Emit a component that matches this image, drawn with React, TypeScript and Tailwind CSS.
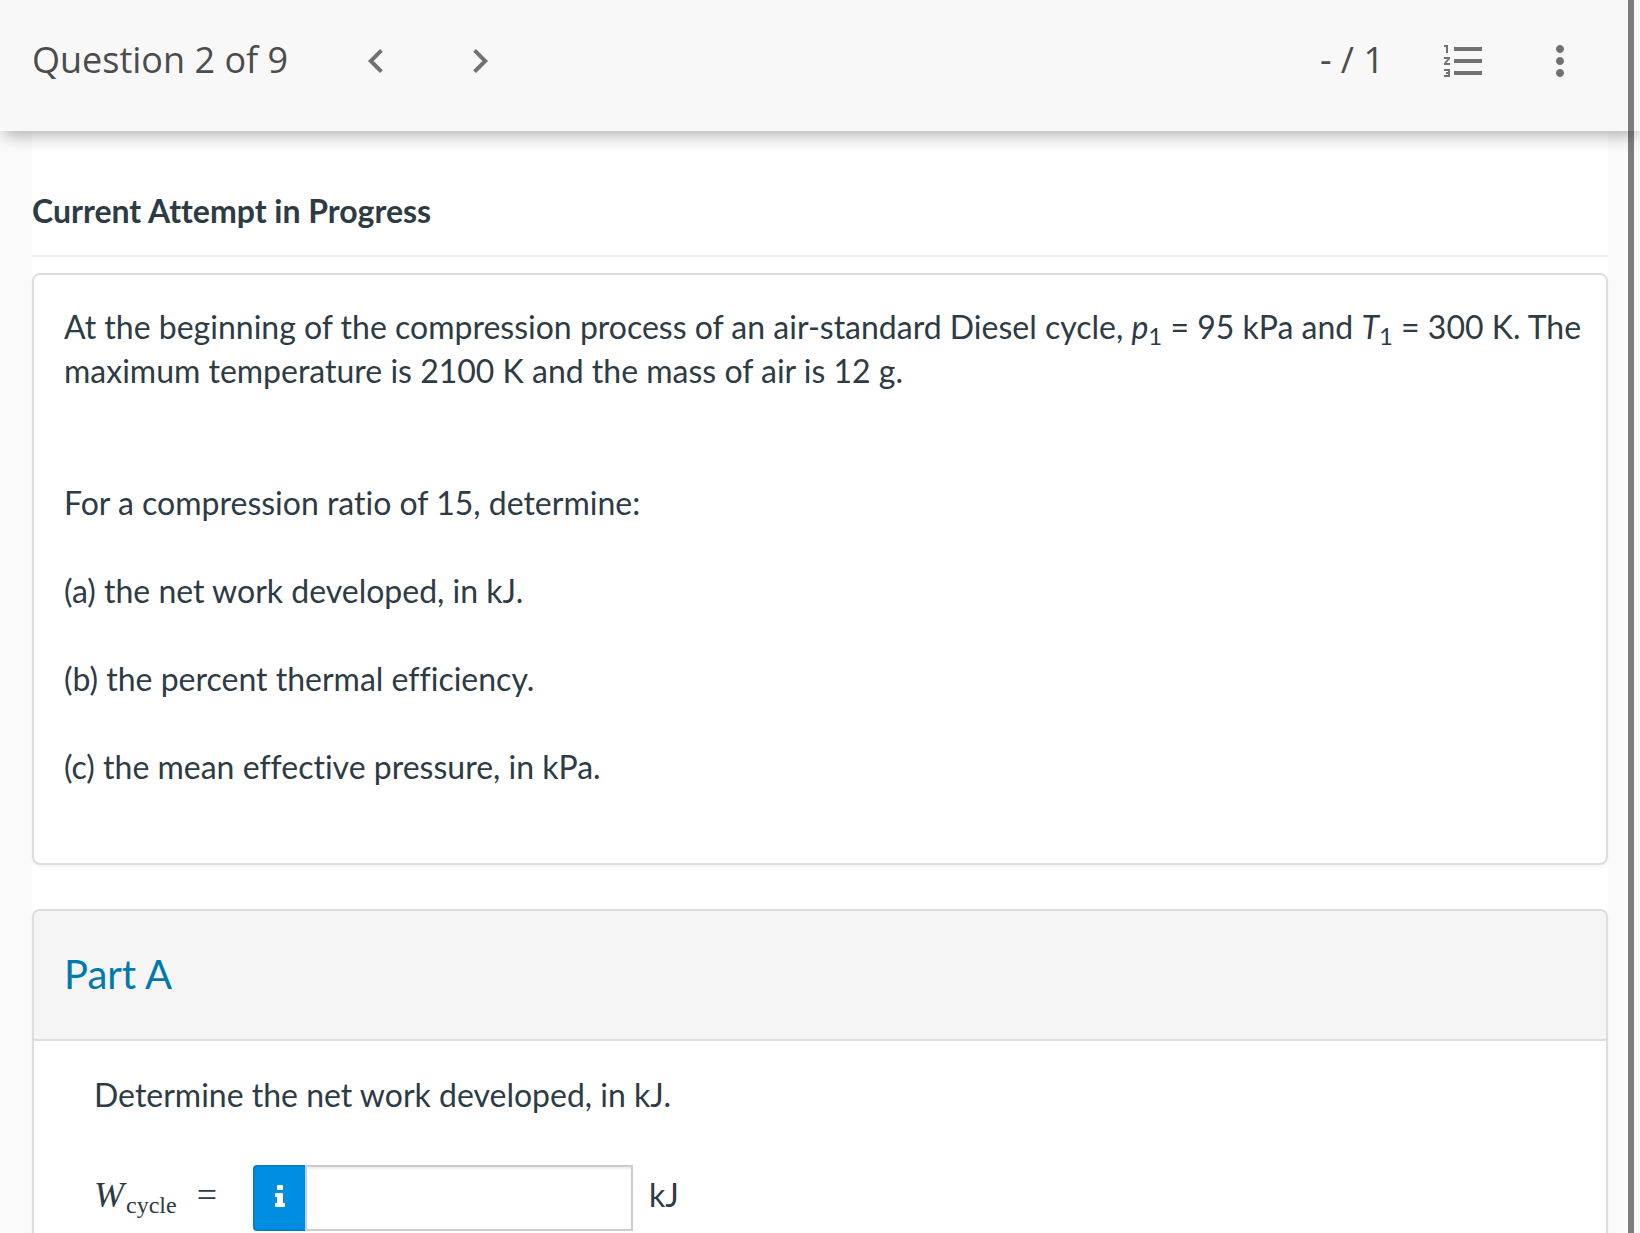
import { MdMoreVert, MdFormatListNumbered, MdChevronLeft, MdChevronRight } from "react-icons/md";

const tasks = [
  "For a compression ratio of 15, determine:",
  "(a) the net work developed, in kJ.",
  "(b) the percent thermal efficiency.",
  "(c) the mean effective pressure, in kPa.",
];

export default function App() {
  return (
    <div className="relative h-screen overflow-hidden bg-[#fafafa] font-['Lato',sans-serif] text-[32px] leading-[44px] text-[#2d3b45]">
      {/* Header */}
      <header className="relative z-10 flex h-[131px] items-start bg-[#f8f8f8] pt-[37px] pr-14 pl-8 font-['Open_Sans',sans-serif] text-[36px] leading-[46px] text-[#4c4c4c] shadow-[0_8px_16px_-4px_rgba(0,0,0,0.32)]">
        <h1>Question 2 of 9</h1>
        <nav className="ml-16 flex gap-14">
          <button aria-label="Previous question"><MdChevronLeft size={48} color="#717171" /></button>
          <button aria-label="Next question"><MdChevronRight size={48} color="#717171" /></button>
        </nav>
        <div className="ml-auto flex items-start">
          <span className="mr-14">- / 1</span>
          <button aria-label="Question list" className="mr-12"><MdFormatListNumbered size={48} color="#717171" /></button>
          <button aria-label="More options"><MdMoreVert size={48} color="#717171" /></button>
        </div>
      </header>

      <main className="mx-8 bg-white pt-[58px] [font-variant-ligatures:none]">
        <h2 className="border-b-2 border-[#eeeeee] pb-[22px] font-bold">Current Attempt in Progress</h2>

        {/* Problem statement */}
        <section className="mt-4 rounded-lg border-2 border-[#dddddd] pt-[30px] pr-4 pb-[74px] pl-[30px] shadow-[0_2px_4px_rgba(0,0,0,0.05)]">
          <p className="mb-[88px]">
            At the beginning of the compression process of an air-standard Diesel cycle, <i>p</i>
            <sub className="text-2xl leading-none">1</sub> = 95 kPa and <i>T</i>
            <sub className="text-2xl leading-none">1</sub> = 300 K. The maximum temperature is 2100 K and the mass of air is 12 g.
          </p>
          <div className="flex flex-col gap-11">
            {tasks.map((t) => (
              <p key={t}>{t}</p>
            ))}
          </div>
        </section>

        {/* Part A */}
        <section className="mt-11 rounded-t-lg border-2 border-[#dddddd] shadow-[0_2px_4px_rgba(0,0,0,0.05)]">
          <h3 className="rounded-t-md border-b-2 border-[#dddddd] bg-[#f5f5f5] px-[30px] pt-[39px] pb-[41px] text-[40px] leading-[48px] text-[#0079ad]">
            Part A
          </h3>
          <div className="px-[60px] pt-8 pb-20">
            <p>Determine the net work developed, in kJ.</p>
            <div className="mt-12 flex items-center">
              <label htmlFor="wcycle" className="mr-9 pb-1.5 font-['Liberation_Serif',serif] text-[36px]">
                <i>W</i>
                <sub className="ml-0.5 text-2xl leading-none">cycle</sub>
                <span className="ml-5">=</span>
              </label>
              <button
                aria-label="Answer information"
                className="flex h-[66px] w-[52px] items-center justify-center rounded-l border-2 border-r-0 border-[#0081cd] bg-[#008ee2] pb-1 text-white"
              >
                <svg width="10" height="22" viewBox="0 0 10 22" fill="currentColor">
                  <rect x="2" y="0" width="6" height="5" rx="1" />
                  <path d="M1 8h6q1 0 1 1v9h1q1 0 1 1v2q0 1-1 1H1q-1 0-1-1v-2q0-1 1-1h1v-6H1q-1 0-1-1V9q0-1 1-1z" />
                </svg>
              </button>
              <input
                id="wcycle"
                className="h-[66px] w-[328px] border-2 border-[#cccccc] px-4 shadow-[inset_0_2px_2px_rgba(0,0,0,0.07)]"
              />
              <span className="ml-4 pb-1.5">kJ</span>
            </div>
          </div>
        </section>
      </main>

      {/* Scrollbar thumb */}
      <div className="absolute inset-y-0 right-1.5 z-20 w-1.5 bg-black/50" />
    </div>
  );
}
